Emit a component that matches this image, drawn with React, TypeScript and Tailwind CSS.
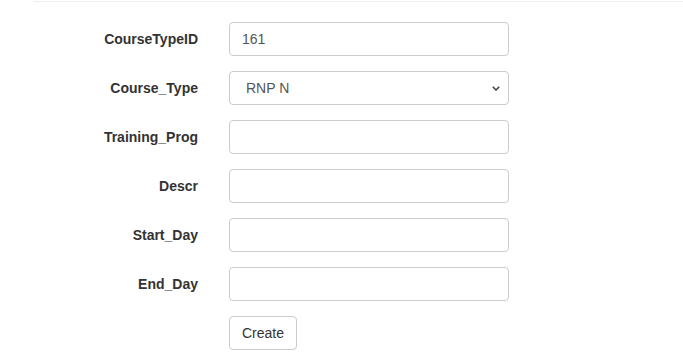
import React from 'react';

const fields = [
  { label: 'CourseTypeID', value: '161', type: 'input' },
  { label: 'Course_Type', value: 'RNP N', type: 'select' },
  { label: 'Training_Prog', value: '', type: 'input' },
  { label: 'Descr', value: '', type: 'input' },
  { label: 'Start_Day', value: '', type: 'input' },
  { label: 'End_Day', value: '', type: 'input' },
];

const App = () => {
  return (
    <div className="min-h-screen bg-white text-[14px] text-[#333] font-['Liberation_Sans',Arial,sans-serif]">
      <div className="pl-[34px] pt-px">
        <div className="border-t border-[#eee]" />
        <form className="mt-[20px] flex flex-col gap-[15px]" onSubmit={(e) => e.preventDefault()}>
          {fields.map((f) => (
            <div key={f.label} className="flex items-center">
              <label className="w-[164px] text-right font-bold leading-5">{f.label}</label>
              <div className="ml-[31px] w-[280px]">
                {f.type === 'select' ? (
                  <div className="relative">
                    <select
                      defaultValue={f.value}
                      className="h-[34px] w-full appearance-none rounded border border-[#ccc] bg-white pl-[16px] pr-8 text-[14px] text-[#555] outline-none"
                    >
                      <option>RNP N</option>
                    </select>
                    {/* native-looking chevron */}
                    <svg
                      className="pointer-events-none absolute right-[9px] top-[15px]"
                      width="8"
                      height="5"
                      viewBox="0 0 8 5"
                    >
                      <path d="M0.8 0.8l3.2 3.2L7.2 0.8" fill="none" stroke="#444" strokeWidth="1.6" />
                    </svg>
                  </div>
                ) : (
                  <input
                    defaultValue={f.value}
                    className="h-[34px] w-full rounded border border-[#ccc] bg-white px-3 text-[14px] text-[#555] outline-none"
                  />
                )}
              </div>
            </div>
          ))}
          <div className="flex">
            <div className="ml-[195px]">
              <button
                type="submit"
                className="h-[34px] w-[68px] rounded border border-[#ccc] bg-white text-[14px] text-[#333]"
              >
                Create
              </button>
            </div>
          </div>
        </form>
      </div>
    </div>
  );
};

export default App;
